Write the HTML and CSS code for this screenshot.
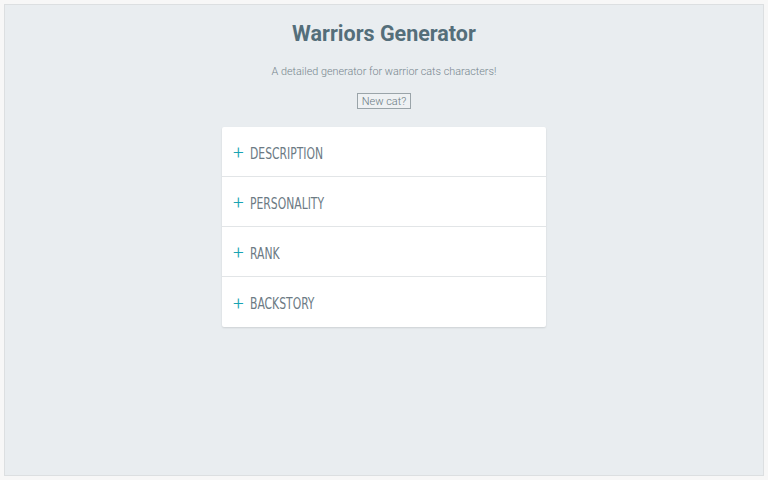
FILE: index.html
```html
<!doctype html>
<html lang="en">
<head>
<meta charset="UTF-8">
<title>Warriors Generator</title>
<link rel="stylesheet" href="styles.css">
</head>
<body>
	<div class="wrapper">
		<h1 class="title">Warriors Generator</h1>
		<p class="sub">A detailed generator for warrior cats characters!</p>
		<button class="bt_new">New cat?</button>

		<div class="list">
			<div class="item"><span class="plus">+</span><span class="label">DESCRIPTION</span></div>
			<div class="item"><span class="plus">+</span><span class="label">PERSONALITY</span></div>
			<div class="item"><span class="plus">+</span><span class="label">RANK</span></div>
			<div class="item"><span class="plus">+</span><span class="label">BACKSTORY</span></div>
		</div>
	</div>
</body>
</html>
```
FILE: styles.css
```css
html,body{
	margin:0;
	height:100%;
}
body{
	background:#f7f7f7;
	padding:4px;
	box-sizing:border-box;
	font-family:Roboto,"Liberation Sans",sans-serif;
}
.wrapper{
	height:100%;
	box-sizing:border-box;
	background:#e9edf0;
	border:1px solid #dcdfe1;
	display:flex;
	flex-direction:column;
	align-items:center;
}
.title{
	margin:16px 0 0 0;
	font-size:21.5px;
	font-weight:bold;
	color:#546e7a;
	line-height:26px;
}
.sub{
	margin:18px 0 0 0;
	font-size:10.8px;
	font-weight:300;
	color:#76858e;
	line-height:14px;
}
.bt_new{
	margin-top:14px;
	padding:0 4px;
	height:16px;
	font-family:Roboto,"Liberation Sans",sans-serif;
	font-size:11px;
	font-weight:300;
	color:#6a7a82;
	background:#eef1f3;
	border:1px solid #9aa4a9;
	border-radius:0;
}
.list{
	margin-top:18px;
	width:324px;
	background:#fff;
	border-radius:2px;
	box-shadow:0 1px 2px rgba(0,0,0,0.12);
}
.item{
	height:50px;
	box-sizing:border-box;
	display:flex;
	align-items:center;
	padding:3px 0 0 11px;
	border-bottom:1px solid #e2e5e7;
}
.item:last-child{
	border-bottom:none;
}
.plus{
	color:#1aa3b3;
	font-size:19px;
	font-weight:300;
	width:17px;
	line-height:18px;
}
.label{
	font-family:"DejaVu Sans Condensed","Liberation Sans",sans-serif;
	font-stretch:condensed;
	font-size:16px;
	color:#6c7a84;
	transform:scaleX(0.75);
	transform-origin:left center;
}
```
